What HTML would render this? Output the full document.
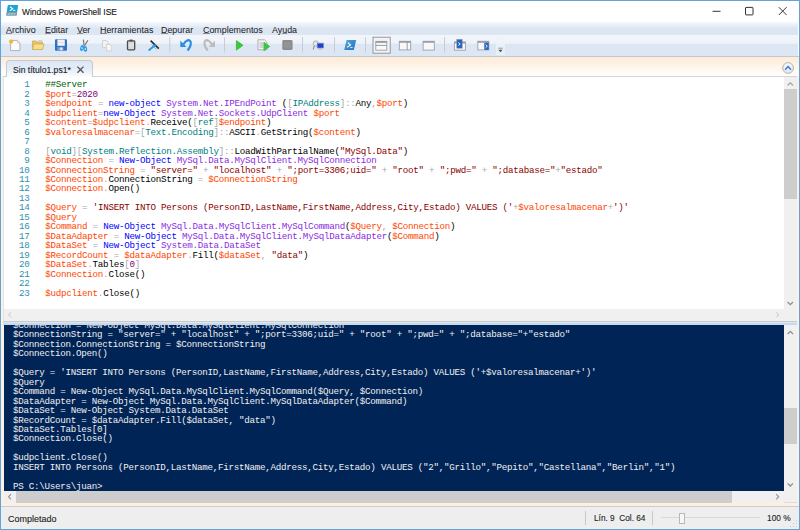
<!DOCTYPE html>
<html><head><meta charset="utf-8">
<style>
*{margin:0;padding:0;box-sizing:border-box}
html,body{width:800px;height:530px;overflow:hidden;background:#fff;font-family:"Liberation Sans",sans-serif}
.a{position:absolute}
#frame{position:absolute;left:0;top:0;width:800px;height:530px;border:1px solid #62a3d9;z-index:50;pointer-events:none}
#title{left:22px;top:5.5px;-webkit-text-stroke:0.15px #1a1a1a;font-size:9.5px;transform:scaleX(0.885);transform-origin:0 0;color:#1a1a1a;white-space:pre}
#menubar{left:1px;top:22px;width:797px;height:13px;background:linear-gradient(#f7f9fd 0,#e6edf7 30%,#dce6f3 48%,#dce6f3 100%)}
.mi{position:absolute;top:23.6px;-webkit-text-stroke:0.05px #1e1e1e;font-size:9.5px;transform:scaleX(0.935);transform-origin:0 0;color:#1e1e1e;white-space:pre}
.mi u{text-decoration:none}
.ul{position:absolute;top:33px;height:1px;background:#8c8c8c}
#toolbar{left:1px;top:35px;width:797px;height:21px;background:linear-gradient(#f2f6fb 0,#eef3fa 38%,#dde7f4 45%,#dce6f4 100%)}
#tbline{left:1px;top:56px;width:798px;height:1px;background:#c4c7cc}
#peach{left:1px;top:57px;width:798px;height:449px;background:linear-gradient(#fdebd6 0,#fef3e7 8px,#fffaf4 14px,#fffdfb 19px,#fdf0e2 20px,#fdf0e2 100%)}
#tabline{left:3px;top:76px;width:794px;height:1px;background:#d4d4d4}
#tab{left:6px;top:60px;width:87px;height:18px;border:1px solid #c6c9cf;border-bottom:none;border-radius:4px 4px 0 0;background:linear-gradient(#dce7f7 0,#e3ecf8 45%,#f6f9fd 85%,#ffffff 100%)}
#tabtxt{left:13px;top:64px;-webkit-text-stroke:0.12px #222;font-size:9.5px;transform:scaleX(0.905);transform-origin:0 0;color:#222;white-space:pre}
#editor{left:3px;top:77px;width:794px;height:244px;background:#fff;border-left:1px solid #e4e4e4}
#vs1{left:784px;top:77px;width:13px;height:232px;background:#f0f0f0}
#vs1t{left:784px;top:89px;width:13px;height:110px;background:#cdcdcd}
#hs1{left:4px;top:309px;width:793px;height:12px;background:#f0f0f0}
#split1{left:3px;top:320.6px;width:794px;height:1.6px;background:#cacac6}
#split2{left:3px;top:322.2px;width:794px;height:0.6px;background:#dfe7ee}
#split3{left:3px;top:323px;width:794px;height:2px;background:#c3daf2}
#console{left:4px;top:325px;width:780px;height:165.5px;background:#012456;overflow:hidden}
#vs2{left:784px;top:325px;width:13px;height:165.5px;background:#f0f0f0}
#hs2{left:4px;top:490.5px;width:793px;height:12.5px;background:#f0f0f0}
#hs2t{left:16px;top:490.5px;width:716px;height:12.5px;background:#cdcdcd}
#stline{left:1px;top:506px;width:798px;height:1px;background:#cdcdcd}
#status{left:1px;top:507px;width:798px;height:22px;background:#eeeeee}
.st{position:absolute;-webkit-text-stroke:0.12px #222;font-size:9.5px;color:#222;white-space:pre;transform:scaleX(0.91);transform-origin:0 0}
pre{font-family:"Liberation Mono",monospace;font-size:9.2px;letter-spacing:-0.258px;line-height:9.47px}
#code{left:45.3px;top:80.3px}
#lnum{left:11.5px;top:80.3px;color:#2b91af;text-align:right;width:18px}
#ctext{left:9px;top:-4.2px;color:#f0f0f0}
.c{color:#006400}.v{color:#ff4500}.n{color:#800080}.o{color:#a9a9a9}.k{color:#0000ff}.g{color:#8a2be2}.t{color:#008080}.m{color:#000}.s{color:#8b0000}
svg{position:absolute;overflow:visible}
</style></head><body>
<div id="frame"></div>
<svg style="left:0;top:0" width="22" height="22"><path d="M8.3 5H17.6Q18.2 5 18.1 5.6L16.7 15.1Q16.6 15.6 16.1 15.6H6.9Q6.3 15.6 6.4 15L7.7 5.5Q7.8 5 8.3 5Z" fill="#1ea4d3"/><path d="M6.8 12.3H17.1L16.7 15.1Q16.6 15.6 16.1 15.6H6.9Q6.3 15.6 6.4 15Z" fill="#8e9ea5"/><g fill="#c4d0d4"><rect x="8" y="13.4" width="2" height="1"/><rect x="10.6" y="13.4" width="2.2" height="1"/><rect x="13.4" y="13.4" width="2" height="1"/></g><polyline points="9.9,6.6 12.7,8.7 9.7,10.9" fill="none" stroke="#fff" stroke-width="1.1"/><line x1="13.1" y1="10.4" x2="15.2" y2="10.4" stroke="#fff" stroke-width="1"/></svg>
<div class="a" id="title">Windows PowerShell ISE</div>
<svg style="left:700px;top:0" width="100" height="22"><line x1="712.5" y1="11.3" x2="720.5" y2="11.3" stroke="#333" stroke-width="1" transform="translate(-700,0)"/><rect x="45.5" y="7.4" width="7.5" height="7.5" rx="0.5" fill="none" stroke="#333" stroke-width="1"/><path d="M78.8 7.2L86.6 15M86.6 7.2L78.8 15" stroke="#333" stroke-width="1"/></svg>
<div class="a" id="menubar"></div>
<div class="mi" style="left:5.5px"><u>A</u>rchivo</div>
<div class="mi" style="left:45px"><u>E</u>ditar</div>
<div class="mi" style="left:76.5px"><u>V</u>er</div>
<div class="mi" style="left:100px"><u>H</u>erramientas</div>
<div class="mi" style="left:161px"><u>D</u>epurar</div>
<div class="mi" style="left:202.5px"><u>C</u>omplementos</div>
<div class="mi" style="left:271.5px">Ay<u>u</u>da</div>
<div class="a" id="toolbar"></div>
<div class="ul" style="left:6px;width:6px"></div><div class="ul" style="left:45px;width:6px"></div><div class="ul" style="left:77px;width:6px"></div><div class="ul" style="left:100px;width:7px"></div><div class="ul" style="left:161px;width:7px"></div><div class="ul" style="left:203px;width:7px"></div><div class="ul" style="left:282px;width:5px"></div>
<div class="a" id="tbline"></div>
<div class="a" id="peach"></div>
<div class="a" id="tabline"></div>
<div class="a" id="tab"></div>
<div class="a" id="tabtxt">Sin título1.ps1*</div>
<svg style="left:0;top:0" width="1" height="1"><path d="M77.4 66.6L83.5 72.8M83.5 66.6L77.4 72.8" stroke="#555" stroke-width="1.35"/></svg>
<svg style="left:0;top:0" width="1" height="1"><defs><radialGradient id="cg" cx="0.5" cy="0.3" r="0.7"><stop offset="0" stop-color="#ffffff"/><stop offset="1" stop-color="#e2e2e2"/></radialGradient></defs><circle cx="788.1" cy="68" r="5.4" fill="url(#cg)" stroke="#b5b5b5" stroke-width="1"/><polyline points="785.2,69.8 788.1,66.4 791,69.8" fill="none" stroke="#3b7fd6" stroke-width="1.5"/></svg>
<div class="a" id="editor"></div>
<div class="a" id="vs1"></div>
<div class="a" id="vs1t"></div>
<div class="a" id="hs1"></div>
<svg style="left:0;top:0" width="1" height="1"><polyline points="787.6,85.4 790.3,82.8 793,85.4" fill="none" stroke="#a0a0a0" stroke-width="1.3"/><polyline points="787.6,302 790.3,304.6 793,302" fill="none" stroke="#8e8e8e" stroke-width="1.3"/><polyline points="10.8,312.3 8.6,314.8 10.8,317.3" fill="none" stroke="#c4c4c4" stroke-width="1"/><polyline points="776.4,312.3 778.6,314.8 776.4,317.3" fill="none" stroke="#c4c4c4" stroke-width="1"/></svg>
<div class="a" id="split1"></div>
<div class="a" id="split2"></div>
<div class="a" id="split3"></div>
<div class="a" id="vs2"></div>
<div class="a" style="left:784px;top:408px;width:12.6px;height:36px;background:#cdcdcd"></div>
<div class="a" id="hs2"></div>
<div class="a" id="hs2t"></div>
<svg style="left:0;top:0" width="1" height="1"><polyline points="787.6,334 790.3,331.4 793,334" fill="none" stroke="#8e8e8e" stroke-width="1.3"/><polyline points="787.6,483.4 790.3,486 793,483.4" fill="none" stroke="#8e8e8e" stroke-width="1.3"/><polyline points="11,494.2 8.6,496.8 11,499.4" fill="none" stroke="#959595" stroke-width="1.2"/><polyline points="776.2,494.2 778.6,496.8 776.2,499.4" fill="none" stroke="#959595" stroke-width="1.2"/><line x1="784" y1="502.5" x2="797" y2="502.5" stroke="#dcdcdc" stroke-width="1"/></svg>
<div class="a" id="stline"></div>
<div class="a" id="status"></div>
<div class="st" style="left:8px;top:513px;transform:scaleX(0.945)">Completado</div>
<div class="a" style="left:584.5px;top:511px;width:1px;height:14px;background:#c8c8c8"></div>
<div class="st" style="left:593.8px;top:512.2px;transform:scaleX(0.87)">Lín. 9  Col. 64</div>
<div class="a" style="left:652px;top:511px;width:1px;height:14px;background:#c8c8c8"></div>
<div class="a" style="left:661px;top:517.3px;width:99px;height:1px;background:#d9d9d9"></div>
<div class="a" style="left:679px;top:512.5px;width:6px;height:11px;background:#f7f7f7;border:1px solid #b8b8b8"></div>
<div class="st" style="left:766.5px;top:512.4px;transform:scaleX(0.88)">100 %</div>
<svg style="left:0;top:0" width="1" height="1"><g fill="#c9ced8"><rect x="796" y="520" width="1" height="1"/><rect x="796" y="523" width="1" height="1"/><rect x="796" y="526" width="1" height="1"/><rect x="793" y="523" width="1" height="1"/><rect x="793" y="526" width="1" height="1"/><rect x="790" y="526" width="1" height="1"/></g></svg>
<pre class="a" id="lnum"> 1
 2
 3
 4
 5
 6
 7
 8
 9
10
11
12
13
14
15
16
17
18
19
20
21
22
23</pre>
<pre class="a" id="code"><span class="c">##Server</span>
<span class="v">$port</span><span class="o">=</span><span class="n">2020</span>
<span class="v">$endpoint</span> <span class="o">=</span> <span class="k">new-object</span> <span class="g">System.Net.IPEndPoint</span> (<span class="o">[</span><span class="t">IPAddress</span><span class="o">]::</span>Any<span class="o">,</span><span class="v">$port</span>)
<span class="v">$udpclient</span><span class="o">=</span><span class="k">new-Object</span> <span class="g">System.Net.Sockets.UdpClient</span> <span class="v">$port</span>
<span class="v">$content</span><span class="o">=</span><span class="v">$udpclient</span><span class="o">.</span>Receive(<span class="o">[</span><span class="t">ref</span><span class="o">]</span><span class="v">$endpoint</span>)
<span class="v">$valoresalmacenar</span><span class="o">=[</span><span class="t">Text.Encoding</span><span class="o">]::</span>ASCII<span class="o">.</span>GetString(<span class="v">$content</span>)

<span class="o">[</span><span class="t">void</span><span class="o">][</span><span class="t">System.Reflection.Assembly</span><span class="o">]::</span>LoadWithPartialName(<span class="s">"MySql.Data"</span>)
<span class="v">$Connection</span> <span class="o">=</span> <span class="k">New-Object</span> <span class="g">MySql.Data.MySqlClient.MySqlConnection</span>
<span class="v">$ConnectionString</span> <span class="o">=</span> <span class="s">"server="</span> <span class="o">+</span> <span class="s">"localhost"</span> <span class="o">+</span> <span class="s">";port=3306;uid="</span> <span class="o">+</span> <span class="s">"root"</span> <span class="o">+</span> <span class="s">";pwd="</span> <span class="o">+</span> <span class="s">";database="</span><span class="o">+</span><span class="s">"estado"</span>
<span class="v">$Connection</span><span class="o">.</span>ConnectionString <span class="o">=</span> <span class="v">$ConnectionString</span>
<span class="v">$Connection</span><span class="o">.</span>Open()

<span class="v">$Query</span> <span class="o">=</span> <span class="s">'INSERT INTO Persons (PersonID,LastName,FirstName,Address,City,Estado) VALUES ('</span><span class="o">+</span><span class="v">$valoresalmacenar</span><span class="o">+</span><span class="s">')'</span>
<span class="v">$Query</span>
<span class="v">$Command</span> <span class="o">=</span> <span class="k">New-Object</span> <span class="g">MySql.Data.MySqlClient.MySqlCommand</span>(<span class="v">$Query</span><span class="o">,</span> <span class="v">$Connection</span>)
<span class="v">$DataAdapter</span> <span class="o">=</span> <span class="k">New-Object</span> <span class="g">MySql.Data.MySqlClient.MySqlDataAdapter</span>(<span class="v">$Command</span>)
<span class="v">$DataSet</span> <span class="o">=</span> <span class="k">New-Object</span> <span class="g">System.Data.DataSet</span>
<span class="v">$RecordCount</span> <span class="o">=</span> <span class="v">$dataAdapter</span><span class="o">.</span>Fill(<span class="v">$dataSet</span><span class="o">,</span> <span class="s">"data"</span>)
<span class="v">$DataSet</span><span class="o">.</span>Tables<span class="o">[</span><span class="n">0</span><span class="o">]</span>
<span class="v">$Connection</span><span class="o">.</span>Close()

<span class="v">$udpclient</span><span class="o">.</span>Close()</pre>
<div class="a" id="console"><pre class="a" id="ctext">$Connection = New-Object MySql.Data.MySqlClient.MySqlConnection
$ConnectionString = "server=" + "localhost" + ";port=3306;uid=" + "root" + ";pwd=" + ";database="+"estado"
$Connection.ConnectionString = $ConnectionString
$Connection.Open()

$Query = 'INSERT INTO Persons (PersonID,LastName,FirstName,Address,City,Estado) VALUES ('+$valoresalmacenar+')'
$Query
$Command = New-Object MySql.Data.MySqlClient.MySqlCommand($Query, $Connection)
$DataAdapter = New-Object MySql.Data.MySqlClient.MySqlDataAdapter($Command)
$DataSet = New-Object System.Data.DataSet
$RecordCount = $dataAdapter.Fill($dataSet, "data")
$DataSet.Tables[0]
$Connection.Close()

$udpclient.Close()
INSERT INTO Persons (PersonID,LastName,FirstName,Address,City,Estado) VALUES ("2","Grillo","Pepito","Castellana","Berlin","1")

PS C:\Users\juan></pre></div>

<svg style="left:0;top:0" width="1" height="1">
<!-- new -->
<path d="M10.6 40.4H17.4L19.9 42.9V50.6H10.6Z" fill="#fcfcfc" stroke="#acacac" stroke-width="0.9"/>
<path d="M17.4 40.4V42.9H19.9" fill="#ececec" stroke="#c4c4c4" stroke-width="0.6"/>
<circle cx="11.1" cy="41.5" r="2.1" fill="#f8b52c"/>
<!-- open -->
<path d="M32.4 41H36.3L37.3 42H42.4V49.4H32.4Z" fill="#e9c865" stroke="#c9a24a" stroke-width="0.7"/>
<path d="M38.2 40.6H42V42.3" fill="none" stroke="#a9d2c4" stroke-width="0.8"/>
<path d="M34 44H44.1L42.5 49.5H32.4Z" fill="#f6dd8f" stroke="#cfa84c" stroke-width="0.7"/>
<!-- save -->
<rect x="55" y="39.2" width="12" height="11.6" rx="1" fill="#2f71c2"/>
<rect x="57.4" y="39.6" width="7.4" height="6.2" fill="#f2f2f2"/>
<line x1="57.4" y1="42.6" x2="64.8" y2="42.6" stroke="#d0d0d0" stroke-width="0.6"/>
<rect x="57.4" y="47.2" width="6" height="3.4" fill="#7fa6d8"/>
<rect x="60.2" y="47.6" width="2.2" height="2.6" fill="#e8eef6"/>
<!-- cut -->
<path d="M83.4 39.6L84 45.4M87.9 40.2L84.6 45.6" stroke="#7a7a7a" stroke-width="1.2" fill="none"/>
<ellipse cx="82.1" cy="48" rx="1.9" ry="3" fill="#2e9ae8" transform="rotate(18 82.1 48)"/>
<ellipse cx="85.3" cy="48.9" rx="1.9" ry="2.9" fill="#2e9ae8" transform="rotate(-8 85.3 48.9)"/>
<ellipse cx="82" cy="48.2" rx="0.7" ry="1.1" fill="#c5e3f8"/><ellipse cx="85.3" cy="49.1" rx="0.7" ry="1.1" fill="#c5e3f8"/>
<!-- copy disabled -->
<path d="M102.5 40.5H106.5L108 42V47.5H102.5Z" fill="#f2f2f2" stroke="#cfcfcf" stroke-width="0.9"/>
<path d="M106.3 44.5H110L111.7 46.2V51H106.3Z" fill="#f5f5f5" stroke="#cfcfcf" stroke-width="0.9"/>
<!-- paste -->
<rect x="127.5" y="40.8" width="7.2" height="9" rx="0.8" fill="#dcdcdc" stroke="#4d4d4d" stroke-width="1.3"/>
<rect x="129.6" y="39.6" width="3" height="1.8" fill="#4d4d4d"/>
<line x1="128.6" y1="45.2" x2="133.6" y2="45.2" stroke="#f0f0f0" stroke-width="0.8"/>
<!-- clear -->
<line x1="150.6" y1="40.6" x2="158.8" y2="48.6" stroke="#2d2d2d" stroke-width="1.7"/>
<line x1="155" y1="45.2" x2="149.2" y2="50" stroke="#2a98e4" stroke-width="1.9" stroke-linecap="round"/>
<line x1="156.4" y1="49.4" x2="151.5" y2="44.6" stroke="#3aa0e6" stroke-width="0.7"/>
<!-- separators -->
<g fill="#c8cdd5"><rect x="169.3" y="37.2" width="1" height="15.3"/><rect x="224" y="37.2" width="1" height="15.3"/><rect x="302" y="37.2" width="1" height="15.3"/><rect x="334" y="37.2" width="1" height="15.3"/><rect x="365" y="37.2" width="1" height="15.3"/><rect x="444" y="37.2" width="1" height="15.3"/></g>
<!-- undo -->
<path d="M183.4 44.4C185.2 40.6 188.4 39.4 190.2 41C191.8 42.6 190.6 47 187.6 50.6" fill="none" stroke="#2b8ee2" stroke-width="2.3"/>
<path d="M180.3 40.6L180.3 46.9L186.4 46.9Z" fill="#2b8ee2"/>
<!-- redo -->
<path d="M211.9 44.4C210.1 40.6 206.9 39.4 205.1 41C203.5 42.6 204.7 47 207.7 50.6" fill="none" stroke="#bcbcbc" stroke-width="2.3"/>
<path d="M215 40.6L215 46.9L208.9 46.9Z" fill="#bcbcbc"/>
<!-- run -->
<path d="M236.4 40.6L243 45.3L236.4 50.1Z" fill="#3fc43f" stroke="#3fc43f" stroke-width="1" stroke-linejoin="round"/>
<!-- run selection -->
<path d="M258 39.8H264.5L266.8 42V49.8H258Z" fill="#f6f6f6" stroke="#a8a8a8" stroke-width="0.9"/>
<g stroke="#8c8ca8" stroke-width="0.7"><line x1="259.5" y1="43" x2="263.5" y2="43"/><line x1="259.5" y1="45" x2="263.5" y2="45"/><line x1="259.5" y1="47" x2="263.5" y2="47"/></g>
<path d="M264 42.3L269.6 46.5L264 50.7Z" fill="#3fc43f" stroke="#3fc43f" stroke-width="1" stroke-linejoin="round"/>
<!-- stop -->
<rect x="282.3" y="40" width="10.3" height="10" rx="1.4" fill="#8b8b8b"/>
<rect x="284" y="41.6" width="7" height="6.8" fill="#939393"/>
<!-- remote -->
<circle cx="315.8" cy="43.5" r="2.6" fill="#e4eaee" stroke="#a0a8ac" stroke-width="0.9"/>
<line x1="314.3" y1="46" x2="313.2" y2="49.5" stroke="#777" stroke-width="0.9"/>
<rect x="317.2" y="43.2" width="6.3" height="4.8" fill="#1a3fe0" stroke="#8a9098" stroke-width="0.7"/>
<line x1="318.5" y1="49.2" x2="322.2" y2="49.2" stroke="#b8b8b8" stroke-width="0.8"/>
<!-- ps -->
<defs><linearGradient id="psg" x1="0" y1="0" x2="1" y2="1"><stop offset="0" stop-color="#54a8dc"/><stop offset="1" stop-color="#1f6fbf"/></linearGradient></defs>
<path d="M346.6 40H356.2L353.8 50H344.2Z" fill="url(#psg)"/>
<polyline points="347.7,42.6 350.6,45 347,47.4" fill="none" stroke="#fff" stroke-width="1.1"/>
<line x1="350.3" y1="47.6" x2="352.6" y2="47.6" stroke="#fff" stroke-width="0.9"/>
<!-- layout1 pressed -->
<rect x="373" y="37.2" width="17.2" height="16" fill="#f1f3f6" stroke="#8e8e8e" stroke-width="0.9"/>
<rect x="375.8" y="41.4" width="11" height="8.8" fill="#f8f8f8" stroke="#9aa0a8" stroke-width="0.9"/>
<rect x="375.8" y="41.4" width="11" height="1.4" fill="#8c94a0"/>
<line x1="375.8" y1="45.4" x2="386.8" y2="45.4" stroke="#8c94a0" stroke-width="0.9"/>
<!-- layout2 -->
<rect x="399.3" y="41.3" width="11.4" height="8.6" fill="#f8f8f8" stroke="#9aa0a8" stroke-width="0.9"/>
<rect x="399.3" y="41.3" width="11.4" height="1.4" fill="#8c94a0"/>
<line x1="407.2" y1="41.3" x2="407.2" y2="49.9" stroke="#8c94a0" stroke-width="0.9"/>
<!-- layout3 -->
<rect x="423.1" y="41.3" width="11.2" height="8.8" fill="#f8f8f8" stroke="#9aa0a8" stroke-width="0.9"/>
<rect x="423.1" y="41.3" width="11.2" height="1.4" fill="#8c94a0"/>
<!-- console popup -->
<rect x="454.4" y="42" width="11" height="8.2" fill="#f8f8f8" stroke="#9aa0a8" stroke-width="0.9"/>
<rect x="454.4" y="42" width="11" height="1.4" fill="#8c94a0"/>
<rect x="456.8" y="39.4" width="5.4" height="8.8" fill="#2566c4" stroke="#8c94a0" stroke-width="0.5"/>
<polyline points="458.4,42.5 460.2,44 458.4,45.5" fill="none" stroke="#fff" stroke-width="0.9"/>
<!-- side console -->
<rect x="477.8" y="41.3" width="11" height="8.6" fill="#f8f8f8" stroke="#9aa0a8" stroke-width="0.9"/>
<rect x="477.8" y="41.3" width="11" height="1.4" fill="#8c94a0"/>
<rect x="484.3" y="42.7" width="4.5" height="7.2" fill="#2566c4"/>
<polyline points="485.6,44.6 487.3,46.2 485.6,47.8" fill="none" stroke="#fff" stroke-width="0.9"/>
<!-- overflow -->
<rect x="496" y="36" width="9" height="19" fill="#eef3fa" opacity="0.7"/>
<line x1="498.3" y1="48.2" x2="502.7" y2="48.2" stroke="#6a6a6a" stroke-width="0.7"/>
<path d="M498.3 49.8H502.7L500.5 52.3Z" fill="#555"/>
</svg>
</body></html>
